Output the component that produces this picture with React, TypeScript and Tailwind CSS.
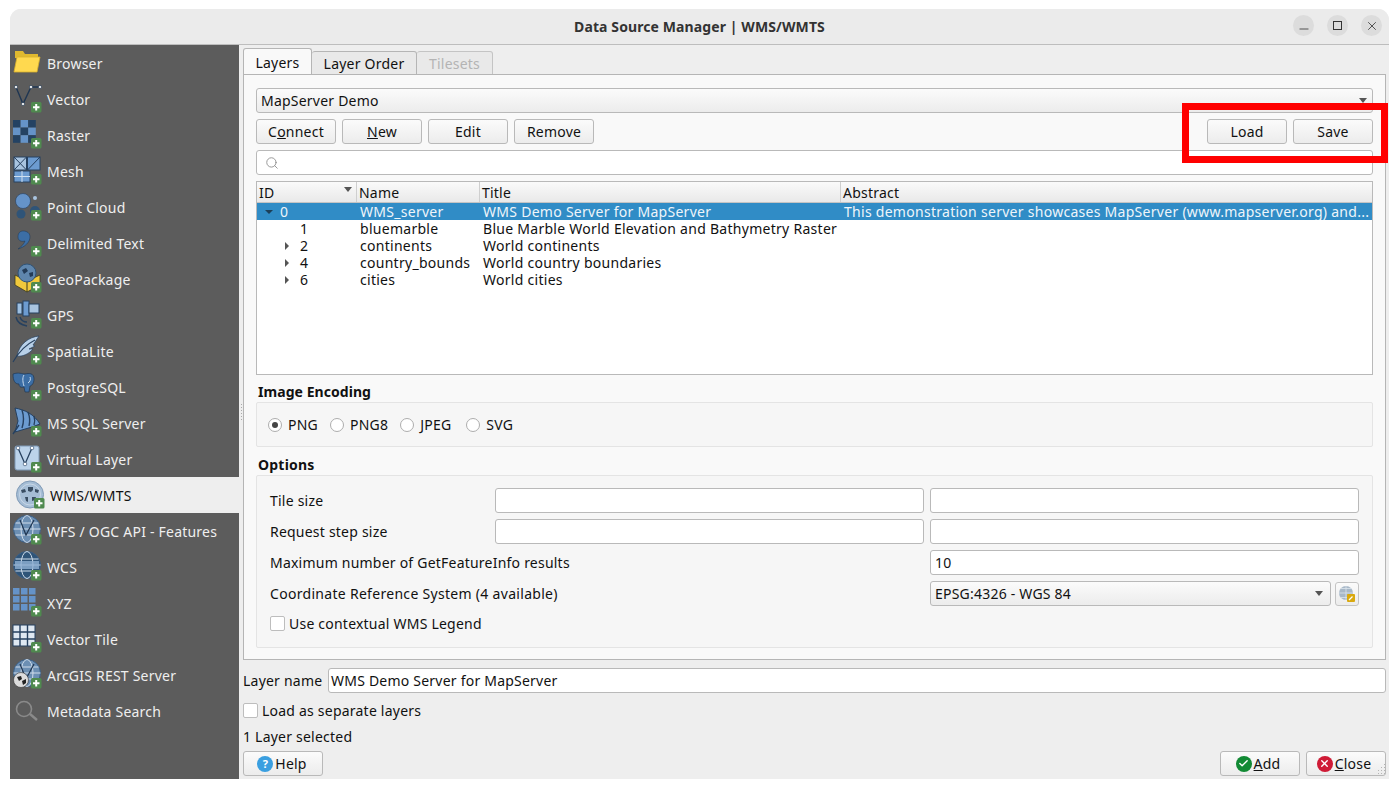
import type { ReactNode } from "react";
import { Search, Minus, X, Check } from "lucide-react";

const Plus = () => (
  <g>
    <rect x="19" y="19" width="10.5" height="10.5" rx="1.5" fill="#4f8a4f" />
    <path d="M24.2 21v6.5M21 24.2h6.5" stroke="#fff" strokeWidth="2" />
  </g>
);

const Globe = ({ dark = false }: { dark?: boolean }) => (
  <g>
    <circle cx="15" cy="14" r="13.5" fill={dark ? "#2f5478" : "#6c8fb3"} stroke="#3b5f86" strokeWidth="1" />
    <path d="M1.5 14h27M3.5 8h23M3.5 20h23" stroke="#cfdcea" strokeWidth="1" fill="none" />
    <ellipse cx="15" cy="14" rx="6" ry="13.5" stroke="#cfdcea" fill="none" />
  </g>
);

const icons: Record<string, ReactNode> = {
  Browser: (
    <g>
      <path d="M3 4h8l2 3h13v4H3z" fill="#e0b92f" />
      <path d="M5 10h23l-3 15H2z" fill="#ffd94f" stroke="#d8b02c" strokeWidth="0.8" />
    </g>
  ),
  Vector: (
    <g>
      <path d="M4 4l7 17 8-17h9" stroke="#1f3652" strokeWidth="1.4" fill="none" />
      {[[4, 4], [11, 21], [19, 4], [28, 4]].map(([x, y]) => (
        <circle key={x} cx={x} cy={y} r="1.6" fill="#f2f2f2" stroke="#1f3652" strokeWidth="0.6" />
      ))}
      <Plus />
    </g>
  ),
  Raster: (
    <g>
      {[0, 1, 2].flatMap((r) =>
        [0, 1, 2].map((c) => (
          <rect key={`${r}${c}`} x={1 + c * 7.6} y={1 + r * 7.6} width="7.6" height="7.6" fill={(r + c) % 2 ? "#6593c8" : "#244263"} />
        ))
      )}
      <Plus />
    </g>
  ),
  Mesh: (
    <g>
      <rect x="2" y="2" width="12.5" height="13" fill="#a9c4e0" stroke="#26405f" />
      <path d="M2 2l12.5 13M14.5 2L2 15" stroke="#26405f" />
      <rect x="15.5" y="2" width="12.5" height="13" fill="#6c9bd0" stroke="#26405f" />
      <path d="M15.5 15L28 2" stroke="#26405f" />
      <rect x="2" y="16" width="16" height="11" fill="#6c9bd0" stroke="#26405f" />
      <path d="M2 21.5h16M10 16v11" stroke="#cfe0f0" />
      <Plus />
    </g>
  ),
  "Point Cloud": (
    <g>
      <circle cx="11" cy="10" r="7.5" fill="#6593c8" stroke="#26405f" strokeWidth="0.6" />
      <circle cx="23" cy="7" r="2" fill="#a9c4e0" />
      <circle cx="9" cy="23" r="4.5" fill="#2f5478" />
      <circle cx="23" cy="20" r="5" fill="#2f5478" />
      <Plus />
    </g>
  ),
  "Delimited Text": (
    <g>
      <path d="M11 4c4 0 7 2 7 6 0 5-5 10-12 12 3-2 6-5 7-8-3 1-7 0-7-4 0-4 2-6 5-6z" fill="#3c6ea5" stroke="#1f3652" strokeWidth="0.5" />
      <Plus />
    </g>
  ),
  GeoPackage: (
    <g>
      <path d="M3 12l12 6 13-6v10l-13 7-12-7z" fill="#f0c93c" stroke="#3a3a20" strokeWidth="0.8" />
      <path d="M15 18v11" stroke="#3a3a20" />
      <circle cx="15" cy="10" r="9" fill="#5f86ad" stroke="#2f5478" />
      <path d="M10 7l4-2 2 3-4 3zM17 10l4-1 0 4-3 1z" fill="#233b57" />
      <Plus />
    </g>
  ),
  GPS: (
    <g>
      <rect x="5" y="4" width="5" height="11" fill="#9dbfe0" stroke="#26405f" />
      <rect x="11" y="2" width="6" height="15" fill="#6c9bd0" stroke="#26405f" />
      <rect x="17" y="5" width="10" height="9" fill="#a9c4e0" stroke="#26405f" />
      <path d="M4 18c1 5 5 8 11 9M8 18c1 3 3 5 7 5" stroke="#26405f" strokeWidth="1.4" fill="none" />
      <Plus />
    </g>
  ),
  SpatiaLite: (
    <g>
      <path d="M27 1C17 2 7 9 5 21c5 1 12-2 16-7l-4 0 6-3-2-1z" fill="#b8d0e8" stroke="#26405f" strokeWidth="0.7" />
      <path d="M1 27C6 18 13 10 23 5" stroke="#26405f" strokeWidth="1.1" fill="none" />
      <Plus />
    </g>
  ),
  PostgreSQL: (
    <g>
      <path d="M1 3c6-2 9 0 12 0 4-1 9-1 9 5 0 5-3 7-4 7l-1 6h-4l-1-5c-4 1-5-1-5-3-4 0-6-3-6-10z" fill="#3c6ea5" stroke="#1f3652" strokeWidth="0.7" />
      <path d="M12 4c-2 3-1 8 0 11M18 6c1 2 0 5-2 6" stroke="#c8dbee" fill="none" />
      <Plus />
    </g>
  ),
  "MS SQL Server": (
    <g>
      <path d="M3 1c10 2 19 6 25 16l-8 3-17 5 3-11z" fill="#6c9bd0" stroke="#26405f" />
      <path d="M10 3c2 6 2 12 0 18M16 5c2 5 2 10 1 14M22 9c1 3 1 6 0 9" stroke="#26405f" strokeWidth="1.4" fill="none" />
      <path d="M1 27l6-9" stroke="#26405f" strokeWidth="1.4" />
      <Plus />
    </g>
  ),
  "Virtual Layer": (
    <g>
      <rect x="3" y="3" width="24" height="24" rx="2" fill="#bcd3ea" stroke="#7f99b5" />
      <path d="M6 5l7 16 7-16" stroke="#26405f" strokeWidth="1.3" fill="none" />
      <circle cx="6" cy="5" r="1.8" fill="#fff" stroke="#26405f" strokeWidth="0.6" />
      <circle cx="20" cy="5" r="1.8" fill="#fff" stroke="#26405f" strokeWidth="0.6" />
      <circle cx="13" cy="21" r="1.8" fill="#fff" stroke="#26405f" strokeWidth="0.6" />
      <Plus />
    </g>
  ),
  "WMS/WMTS": (
    <g>
      <circle cx="15" cy="15.5" r="13.5" fill="#a5bdd5" stroke="#7f99b5" />
      <path d="M6 11l4-1 1 3-4 1zM13 8h5v3l-2 2-3-1zM20 10l4 1-1 3-3-1zM10 18l3 0 0 5-2-1zM17 18l4 0-1 3-3 1z" fill="#3a4e63" />
      <circle cx="15" cy="15.5" r="10.5" fill="none" stroke="#dfe8f1" strokeWidth="0.6" />
      <Plus />
    </g>
  ),
  "WFS / OGC API - Features": (
    <g>
      <Globe />
      <path d="M8 5l6 15 8-15" stroke="#1f3652" strokeWidth="1.2" fill="none" />
      <Plus />
    </g>
  ),
  WCS: (
    <g>
      <Globe dark />
      <rect x="3" y="10" width="24" height="8" fill="#8fb0d3" opacity="0.8" />
      <Plus />
    </g>
  ),
  XYZ: (
    <g>
      {[0, 1, 2].flatMap((r) =>
        [0, 1, 2].map((c) => (
          <rect key={`${r}${c}`} x={1 + c * 8} y={1 + r * 8} width="6.5" height="6.5" fill="#6593c8" />
        ))
      )}
      <Plus />
    </g>
  ),
  "Vector Tile": (
    <g>
      <rect x="1" y="2" width="22" height="21" fill="#dfe8f1" stroke="#26405f" />
      <path d="M8 2v21M15.5 2v21M1 9h22M1 16h22" stroke="#26405f" strokeWidth="1.4" />
      <Plus />
    </g>
  ),
  "ArcGIS REST Server": (
    <g>
      <Globe />
      <path d="M8 5l6 15 8-15" stroke="#1f3652" strokeWidth="1.2" fill="none" />
      <circle cx="9" cy="21" r="7.5" fill="#dcdcdc" stroke="#333" strokeWidth="0.6" />
      <path d="M5 18l4-1 1 3-3 2zM10 22l4-2 0 4-3 2z" fill="#222" />
      <Plus />
    </g>
  ),
  "Metadata Search": (
    <g stroke="#8a8a8a" fill="none">
      <circle cx="12" cy="14" r="7.5" strokeWidth="1.6" />
      <path d="M18 19l7 6" strokeWidth="2.4" />
    </g>
  ),
};

const providers = [
  "Browser", "Vector", "Raster", "Mesh", "Point Cloud", "Delimited Text", "GeoPackage", "GPS", "SpatiaLite",
  "PostgreSQL", "MS SQL Server", "Virtual Layer", "WMS/WMTS", "WFS / OGC API - Features", "WCS", "XYZ",
  "Vector Tile", "ArcGIS REST Server", "Metadata Search",
];

const Btn = ({ children, className = "w-[80px]" }: { children: ReactNode; className?: string }) => (
  <div className={`${className} h-[25px] flex items-center justify-center rounded-[3px] border border-[#b9b9b9] bg-gradient-to-b from-[#fbfbfb] to-[#ececec] text-[#111]`}>
    {children}
  </div>
);

const Field = ({ value = "", className = "px-[4px]" }: { value?: string; className?: string }) => (
  <div className={`${className} h-[25px] flex items-center bg-white border border-[#b9b9b9] rounded-[3px] text-[#111]`}>{value}</div>
);

const Caret = () => <div className="w-0 h-0 border-x-[4px] border-x-transparent border-t-[5px] border-t-[#555]" />;

const Box = () => <div className="w-[15px] h-[15px] bg-white border border-[#bdbdbd] rounded-[2px]" />;

const Radio = ({ on = false }: { on?: boolean }) => (
  <div className="w-[14px] h-[14px] rounded-full bg-white border border-[#adadad] flex items-center justify-center">
    {on && <div className="w-[6px] h-[6px] rounded-full bg-[#444]" />}
  </div>
);

const rows = [
  { id: "0", name: "WMS_server", title: "WMS Demo Server for MapServer", abs: "This demonstration server showcases MapServer (www.mapserver.org) and...", depth: 0, arrow: "down" },
  { id: "1", name: "bluemarble", title: "Blue Marble World Elevation and Bathymetry Raster", abs: "", depth: 1, arrow: "" },
  { id: "2", name: "continents", title: "World continents", abs: "", depth: 1, arrow: "right" },
  { id: "4", name: "country_bounds", title: "World country boundaries", abs: "", depth: 1, arrow: "right" },
  { id: "6", name: "cities", title: "World cities", abs: "", depth: 1, arrow: "right" },
];

const FormLabel = ({ children }: { children: ReactNode }) => <div className="w-[225px] shrink-0">{children}</div>;

export default function App() {
  return (
    <div className="w-[1399px] h-[789px] bg-white pt-[9px] pl-[10px] text-[14px] leading-[17px] tracking-[0.22px] text-[#1a1a1a] relative overflow-hidden" style={{ fontFamily: '"Noto Sans", sans-serif' }}>
      <div className="w-[1379px] h-[770px] bg-[#eeeeee] rounded-t-[11px] overflow-hidden flex flex-col">
        {/* title bar */}
        <div className="h-[36px] shrink-0 bg-[#ebebeb] border-b border-[#bdbdbd] flex items-center relative">
          <div className="w-full text-center font-bold text-[#333] tracking-[0.1px]">Data Source Manager | WMS/WMTS</div>
          <div className="absolute right-[7px] top-[6px] flex gap-[13px]">
            <div className="w-[21px] h-[21px] rounded-full bg-[#dcdcdc] flex items-center justify-center"><Minus size={14} strokeWidth={1.4} className="mt-[7px] text-[#333]" /></div>
            <div className="w-[21px] h-[21px] rounded-full bg-[#dcdcdc] flex items-center justify-center"><div className="w-[9px] h-[9px] border border-[#333]" /></div>
            <div className="w-[21px] h-[21px] rounded-full bg-[#dcdcdc] flex items-center justify-center"><X size={14} strokeWidth={1.4} className="text-[#333]" /></div>
          </div>
        </div>

        <div className="flex-1 flex min-h-0">
          {/* sidebar */}
          <div className="w-[229px] shrink-0 bg-[#5c5c5c] text-[#efefef]">
            {providers.map((p) => {
              const active = p === "WMS/WMTS";
              return (
                <div key={p} className={`h-[36px] flex items-center ${active ? "bg-[#eeeeee] text-[#111] pl-[5px]" : "pl-[2px]"}`}>
                  <svg width="32" height="32" viewBox="0 0 32 32" className="shrink-0">{icons[p]}</svg>
                  <span className="ml-[3px]">{p}</span>
                </div>
              );
            })}
          </div>

          {/* splitter */}
          <div className="w-[4px] shrink-0 flex flex-col items-center justify-center gap-[2px]">
            {[0, 1, 2, 3, 4, 5].map((d) => <div key={d} className="w-[1px] h-[1px] bg-[#aaa]" />)}
          </div>

          {/* main */}
          <div className="w-[1143px] shrink-0 flex flex-col pt-[3px]">
            <div className="h-[27px] flex items-end">
              <div className="w-[69px] h-[27px] bg-[#f9f9f9] border border-b-0 border-[#b5b5b5] rounded-t-[3px] flex items-center justify-center text-[#111]">Layers</div>
              <div className="w-[105px] h-[24px] bg-[#e9e9e9] border border-l-0 border-[#b5b5b5] rounded-t-[3px] flex items-center justify-center text-[#111]">Layer Order</div>
              <div className="w-[76px] h-[24px] bg-[#e9e9e9] border border-l-0 border-[#c4c4c4] rounded-t-[3px] flex items-center justify-center text-[#b4b4b4]">Tilesets</div>
            </div>
            <div className="h-[586px] bg-[#f9f9f9] border border-[#b5b5b5] -mt-[1px] pt-[13px] pl-[12px] pr-[12px] flex flex-col">
              <div className="h-[25px] shrink-0 flex items-center justify-between pl-[4px] pr-[5px] rounded-[3px] border border-[#b9b9b9] bg-gradient-to-b from-[#fbfbfb] to-[#ececec] text-[#111]">
                <span>MapServer Demo</span>
                <Caret />
              </div>
              <div className="mt-[6px] flex gap-[6px]">
                <Btn>C<u>o</u>nnect</Btn>
                <Btn><u>N</u>ew</Btn>
                <Btn>Edit</Btn>
                <Btn>Remove</Btn>
                <div className="flex-1" />
                <Btn>Load</Btn>
                <Btn>Save</Btn>
              </div>
              <div className="mt-[6px] h-[25px] shrink-0 bg-white border border-[#b9b9b9] rounded-[3px] flex items-center pl-[8px]">
                <Search size={14} strokeWidth={1.5} className="text-[#8c8c8c]" />
              </div>

              {/* layer tree */}
              <div className="mt-[6px] h-[194px] shrink-0 bg-white border border-[#b9b9b9]">
                <div className="h-[21px] flex bg-gradient-to-b from-[#fafafa] to-[#e9e9e9] border-b border-[#c4c4c4] text-[#111]">
                  <div className="w-[100px] pl-[2px] pr-[4px] flex items-center justify-between border-r border-[#cfcfcf]"><span>ID</span><div className="mb-[5px]"><Caret /></div></div>
                  <div className="w-[123px] pl-[2px] flex items-center border-r border-[#cfcfcf]">Name</div>
                  <div className="w-[361px] pl-[2px] flex items-center border-r border-[#cfcfcf]">Title</div>
                  <div className="flex-1 pl-[2px] flex items-center">Abstract</div>
                </div>
                {rows.map((r) => (
                  <div key={r.id} className={`h-[17px] flex items-center tracking-[0.28px] ${r.arrow === "down" ? "bg-[#308cc6] text-[#eef5fa]" : "text-[#111]"}`}>
                    <div className={`w-[99px] shrink-0 flex items-center ${r.depth ? "pl-[28px]" : "pl-[8px]"}`}>
                      <div className="w-[15px] shrink-0 flex">
                        {r.arrow === "down" && <div className="w-0 h-0 border-x-[4px] border-x-transparent border-t-[4px] border-t-[#1c3f58]" />}
                        {r.arrow === "right" && <div className="w-0 h-0 border-y-[4px] border-y-transparent border-l-[4px] border-l-[#555]" />}
                      </div>
                      <span>{r.id}</span>
                    </div>
                    <div className="w-[123px] shrink-0 pl-[4px] whitespace-nowrap">{r.name}</div>
                    <div className="w-[361px] shrink-0 pl-[4px] whitespace-nowrap">{r.title}</div>
                    <div className="flex-1 min-w-0 pl-[4px] whitespace-nowrap overflow-hidden">{r.abs}</div>
                  </div>
                ))}
              </div>

              <div className="mt-[8px] pl-[2px] font-bold text-[#111] tracking-[0.05px]">Image Encoding</div>
              <div className="mt-[2px] h-[45px] shrink-0 bg-[#f6f6f6] border border-[#e4e4e4] rounded-[2px] flex items-center pl-[11px] text-[#111]">
                <Radio on /><span className="ml-[6px]">PNG</span>
                <div className="ml-[12px]"><Radio /></div><span className="ml-[6px]">PNG8</span>
                <div className="ml-[12px]"><Radio /></div><span className="ml-[6px]">JPEG</span>
                <div className="ml-[15px]"><Radio /></div><span className="ml-[6px]">SVG</span>
              </div>

              <div className="mt-[9px] pl-[2px] font-bold text-[#111]">Options</div>
              <div className="mt-[2px] h-[173px] shrink-0 bg-[#f6f6f6] border border-[#e4e4e4] rounded-[2px] pt-[12px] pl-[13px] pr-[11px] flex flex-col gap-[6px] text-[#111]">
                <div className="flex items-center">
                  <FormLabel>Tile size</FormLabel>
                  <Field className="w-[429px]" />
                  <Field className="w-[429px] ml-[6px]" />
                </div>
                <div className="flex items-center">
                  <FormLabel>Request step size</FormLabel>
                  <Field className="w-[429px]" />
                  <Field className="w-[429px] ml-[6px]" />
                </div>
                <div className="flex items-center">
                  <div className="w-[660px] shrink-0">Maximum number of GetFeatureInfo results</div>
                  <Field className="w-[429px] px-[4px]" value="10" />
                </div>
                <div className="flex items-center">
                  <div className="w-[660px] shrink-0 tracking-[0.3px]">Coordinate Reference System (4 available)</div>
                  <div className="w-[401px] h-[25px] flex items-center justify-between pl-[4px] pr-[7px] rounded-[3px] border border-[#b9b9b9] bg-gradient-to-b from-[#fbfbfb] to-[#ececec]">
                    <span>EPSG:4326 - WGS 84</span>
                    <Caret />
                  </div>
                  <div className="w-[24px] h-[24px] ml-[4px] rounded-[3px] border border-[#c4c4c4] bg-gradient-to-b from-[#fbfbfb] to-[#ececec] flex items-center justify-center">
                    <svg width="18" height="18" viewBox="0 0 18 18">
                      <circle cx="8" cy="8" r="7" fill="#a8b8c8" />
                      <path d="M1 8h14M8 1v14M3 3.5h10M3 12.5h10" stroke="#dde6ee" strokeWidth="0.8" />
                      <rect x="9" y="9" width="8" height="8" rx="1" fill="#d9a90f" />
                      <path d="M11 15l3.5-3.5" stroke="#fff" strokeWidth="1.3" />
                    </svg>
                  </div>
                </div>
                <div className="flex items-center mt-[3px]">
                  <Box />
                  <span className="ml-[4px]">Use contextual WMS Legend</span>
                </div>
              </div>
            </div>

            <div className="mt-[8px] flex items-center text-[#111]">
              <div className="w-[85px] shrink-0">Layer name</div>
              <Field className="flex-1 px-[2px]" value="WMS Demo Server for MapServer" />
            </div>
            <div className="mt-[9px] h-[17px] flex items-center text-[#111]">
              <Box />
              <span className="ml-[4px]">Load as separate layers</span>
            </div>
            <div className="mt-[9px] h-[17px] text-[#111]">1 Layer selected</div>
            <div className="mt-[6px] flex gap-[6px]">
              <Btn className="w-[80px] gap-[2px] pr-[2px]">
                <div className="w-[16px] h-[16px] rounded-full bg-[#3a9fe0] text-white text-[11px] font-bold flex items-center justify-center tracking-normal">?</div>
                Help
              </Btn>
              <div className="flex-1" />
              <Btn className="w-[80px] gap-[2px] pr-[4px]">
                <div className="w-[16px] h-[16px] rounded-full bg-[#128a34] flex items-center justify-center"><Check size={11} strokeWidth={3} className="text-white" /></div>
                <span><u>A</u>dd</span>
              </Btn>
              <Btn className="w-[80px] gap-[2px] pr-[4px]">
                <div className="w-[16px] h-[16px] rounded-full bg-[#cf1b36] flex items-center justify-center"><X size={11} strokeWidth={3} className="text-white" /></div>
                <span><u>C</u>lose</span>
              </Btn>
            </div>
          </div>
        </div>
      </div>
      {/* size grip over the close button */}
      <svg width="8" height="12" viewBox="0 0 8 12" className="absolute left-[1378px] top-[763px]">
        {[[6, 1], [6, 4], [3, 4], [6, 7], [3, 7], [0, 7], [6, 10], [3, 10], [0, 10]].map(([x, y]) => (
          <rect key={`${x}-${y}`} x={x} y={y} width="1" height="1" fill="#b5b5b5" />
        ))}
      </svg>
      {/* annotation over the screenshot */}
      <div className="absolute left-[1182px] top-[103px] w-[206px] h-[60px] border-[7px] border-[#ff0000]" />
    </div>
  );
}
